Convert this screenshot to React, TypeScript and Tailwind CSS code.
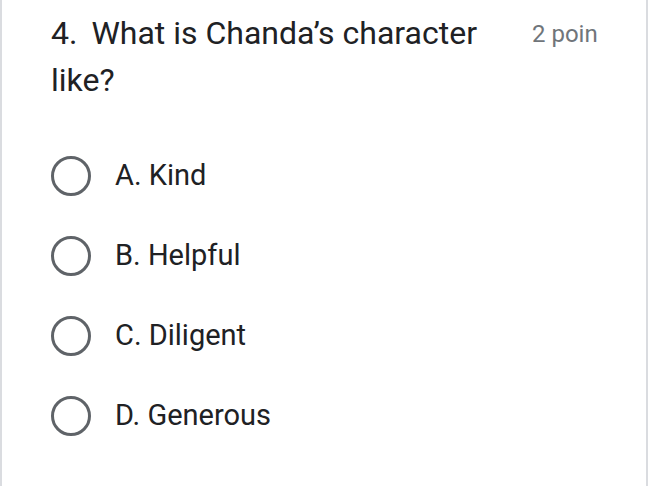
const options = ['A. Kind', 'B. Helpful', 'C. Diligent', 'D. Generous'];

export default function App() {
  return (
    <div
      className="h-[486px] w-[648px] overflow-hidden bg-[#dadce0] pl-[2px] pr-[2px]"
      style={{ fontFamily: 'Roboto, "Noto Sans", sans-serif' }}
    >
      <div className="h-full w-full bg-white pl-[49px] pt-[10px]">
        <div className="flex items-start">
          <div className="w-[450px] text-[32px] leading-[47px] text-[#202124]">
            4.<span className="inline-block w-[14px]" />What is Chanda’s character like?
          </div>
          <div className="ml-[31px] whitespace-nowrap pt-[1px] text-[24px] leading-[47px] text-[#70757a]">
            2 poin
          </div>
        </div>
        <div className="mt-[32px] flex flex-col">
          {options.map((o) => (
            <div key={o} className="flex h-[80px] items-center">
              <span className="h-[40px] w-[40px] shrink-0 rounded-full border-[3px] border-[#5f6368]" />
              <span className="ml-[24px] text-[29px] text-[#202124]">{o}</span>
            </div>
          ))}
        </div>
      </div>
    </div>
  );
}
